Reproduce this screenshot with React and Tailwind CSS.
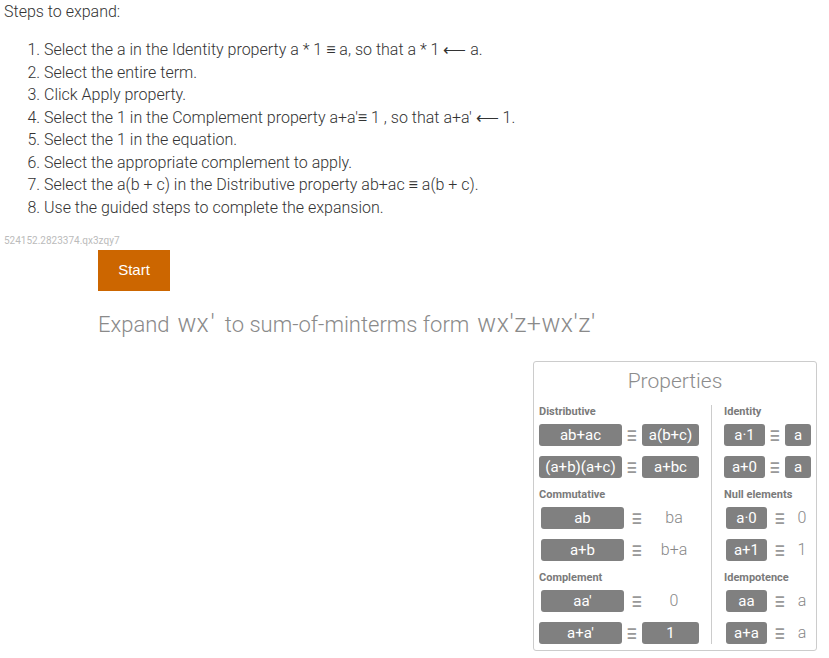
import React from "react";

const steps = [
  "Select the a in the Identity property a * 1 ≡ a, so that a * 1 ⟵ a.",
  "Select the entire term.",
  "Click Apply property.",
  "Select the 1 in the Complement property a+a'≡ 1 , so that a+a' ⟵ 1.",
  "Select the 1 in the equation.",
  "Select the appropriate complement to apply.",
  "Select the a(b + c) in the Distributive property ab+ac ≡ a(b + c).",
  "Use the guided steps to complete the expansion.",
];

function Box({ children, className }) {
  return (
    <div
      className={
        "h-[22px] rounded-[3px] bg-[#808080] text-white text-[15px] leading-[22px] text-center font-['Roboto',sans-serif] " +
        className
      }
    >
      {children}
    </div>
  );
}

function Label({ children }) {
  return (
    <div className="h-[14px] text-[11px] leading-[14px] font-bold text-[#7a7a7a]">
      {children}
    </div>
  );
}

function Eq({ className }) {
  return (
    <div className={"h-[22px] leading-[22px] text-center text-[17px] font-light text-[#999] " + className}>
      <span className="inline-block scale-y-150">≡</span>
    </div>
  );
}

// left column rows
function BoxRow({ left, right }) {
  return (
    <div className="flex items-center h-[22px]">
      <Box className="w-[83px]">{left}</Box>
      <Eq className="w-[20px]" />
      <Box className="w-[57px]">{right}</Box>
    </div>
  );
}

function TextRow({ left, right }) {
  return (
    <div className="flex items-center h-[22px] pl-[2px]">
      <Box className="w-[83px]">{left}</Box>
      <Eq className="w-[26px]" />
      <div className="w-[48px] h-[22px] leading-[22px] text-center text-[16px] font-light text-[#888]">{right}</div>
    </div>
  );
}

// right column rows
function SmallBoxRow({ left, right }) {
  return (
    <div className="flex items-center h-[22px]">
      <Box className="w-[41px]">{left}</Box>
      <Eq className="w-[20px]" />
      <Box className="w-[26px]">{right}</Box>
    </div>
  );
}

function SmallTextRow({ left, right }) {
  return (
    <div className="flex items-center h-[22px] pl-[2px]">
      <Box className="w-[41px]">{left}</Box>
      <Eq className="w-[26px]" />
      <div className="w-[18px] h-[22px] leading-[22px] text-center text-[16px] font-light text-[#888]">{right}</div>
    </div>
  );
}

export default function App() {
  return (
    <div className="w-[829px] min-h-[658px] bg-white font-['Roboto',sans-serif] text-[#333]">
      {/* Instructions */}
      <div className="pt-[1px] pl-[4px] text-[16px] leading-[22px] font-light">Steps to expand:</div>
      <ol className="mt-[16px] pl-[44px] list-decimal text-[16px] leading-[22.5px] font-light">
        {steps.map((s, i) => (
          <li key={i}>{s}</li>
        ))}
      </ol>

      <div className="mt-[16px] pl-[4px] text-[10px] leading-[12px] text-[#bbb]">524152.2823374.qx3zqy7</div>

      <div className="pl-[98px] mt-[3px]">
        <button className="w-[72px] h-[41px] bg-[#cc6600] text-white text-[15px] font-['Liberation_Sans',Arial,sans-serif]">
          Start
        </button>
        <div className="mt-[17px] text-[22px] leading-[32px] font-light text-[#8a8a8a] whitespace-nowrap">
          Expand
          <span className="ml-[8px] mr-[10px] text-[25px]">
            wx<span className="ml-[2px]">'</span>
          </span>
          to sum-of-minterms form
          <span className="ml-[8px] text-[25px] tracking-[0.5px]">wx'z+wx'z'</span>
        </div>
      </div>

      {/* Properties panel */}
      <div className="flex justify-end pr-[12px] mt-[20px]">
        <div className="w-[284px] h-[290px] border border-[#ccc] rounded-[3px] pt-[4px]">
          <div className="h-[30px] leading-[30px] text-center text-[21px] font-light text-[#8c8c8c]">
            Properties
          </div>
          <div className="flex mt-[9px] pl-[5px]">
            <div className="w-[160px] flex flex-col">
              <Label>Distributive</Label>
              <div className="mt-[5px] flex flex-col gap-[10px]">
                <BoxRow left="ab+ac" right="a(b+c)" />
                <BoxRow left="(a+b)(a+c)" right="a+bc" />
              </div>
              <div className="mt-[10px]">
                <Label>Commutative</Label>
              </div>
              <div className="mt-[5px] flex flex-col gap-[10px]">
                <TextRow left="ab" right="ba" />
                <TextRow left="a+b" right="b+a" />
              </div>
              <div className="mt-[10px]">
                <Label>Complement</Label>
              </div>
              <div className="mt-[5px] flex flex-col gap-[10px]">
                <TextRow left="aa'" right="0" />
                <BoxRow left="a+a'" right="1" />
              </div>
            </div>
            <div className="w-px bg-[#ccc] ml-[12px] mr-[12px]" />
            <div className="w-[87px] flex flex-col">
              <Label>Identity</Label>
              <div className="mt-[5px] flex flex-col gap-[10px]">
                <SmallBoxRow left="a·1" right="a" />
                <SmallBoxRow left="a+0" right="a" />
              </div>
              <div className="mt-[10px]">
                <Label>Null elements</Label>
              </div>
              <div className="mt-[5px] flex flex-col gap-[10px]">
                <SmallTextRow left="a·0" right="0" />
                <SmallTextRow left="a+1" right="1" />
              </div>
              <div className="mt-[10px]">
                <Label>Idempotence</Label>
              </div>
              <div className="mt-[5px] flex flex-col gap-[10px]">
                <SmallTextRow left="aa" right="a" />
                <SmallTextRow left="a+a" right="a" />
              </div>
            </div>
          </div>
        </div>
      </div>
    </div>
  );
}
